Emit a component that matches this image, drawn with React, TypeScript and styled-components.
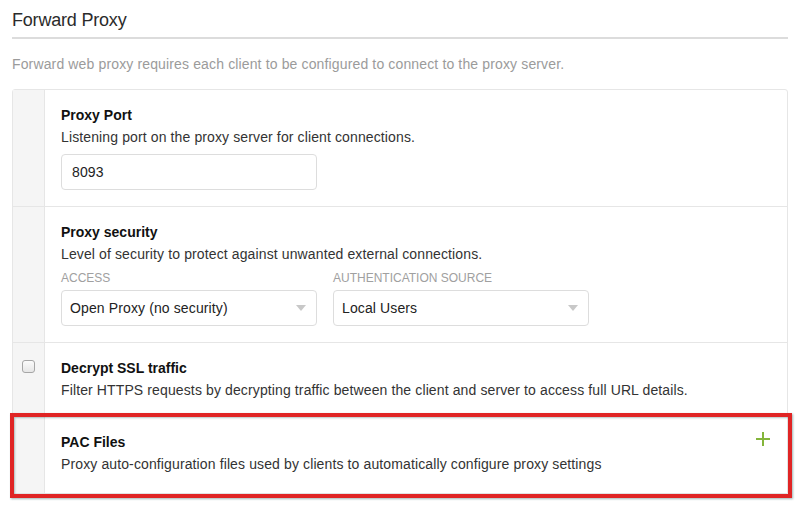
import React from "react";
import styled, { createGlobalStyle } from "styled-components";

const GlobalStyle = createGlobalStyle`
  html, body {
    margin: 0;
    padding: 0;
    background: #ffffff;
  }
  body {
    min-height: 512px;
    font-family: "Liberation Sans", Arial, sans-serif;
    color: #333;
  }
`;

const Page = styled.div`
  width: 776px;
  padding: 0 7px 20px 12px;
`;

const Heading = styled.h2`
  margin: 0;
  padding: 9px 0 6px;
  font-size: 18px;
  line-height: 22px;
  font-weight: 400;
  letter-spacing: -0.2px;
  color: #2b2b2b;
  border-bottom: 2px solid #dcdcdc;
`;

const Intro = styled.p`
  margin: 15px 0 15px;
  font-size: 14px;
  line-height: 20px;
  letter-spacing: 0.14px;
  color: #9b9b9b;
`;

const Panel = styled.div`
  border: 1px solid #e6e6e6;
  border-radius: 3px 3px 0 0;
`;

const Body = styled.div`
  flex: 1;
  padding: 15px 16px 16px 16px;
  position: relative;
`;

const Row = styled.div`
  position: relative;
  display: flex;
  border-top: 1px solid #e6e6e6;
  &:first-child {
    border-top: none;
  }
  &:last-child ${Body} {
    padding-bottom: 19px;
  }
`;

const Gutter = styled.div`
  width: 31px;
  flex: none;
  background: #f5f5f5;
  border-right: 1px solid #e6e6e6;
  display: flex;
  justify-content: center;
  align-items: flex-start;
  padding-top: 17px;
`;

const Title = styled.div`
  font-size: 14px;
  line-height: 20px;
  font-weight: 700;
  color: #111;
  margin-bottom: 2px;
`;

const Help = styled.div`
  font-size: 14px;
  line-height: 20px;
  letter-spacing: 0.12px;
  color: #333;
`;

const Fields = styled.div`
  display: flex;
  gap: 16px;
  margin-top: 6px;
`;

const Field = styled.div`
  width: 256px;
`;

const Label = styled.div`
  font-size: 12px;
  line-height: 16px;
  color: #a0a0a0;
  text-transform: uppercase;
  margin-bottom: 4px;
`;

const TextInput = styled.div`
  box-sizing: border-box;
  width: 256px;
  height: 36px;
  margin-top: 7px;
  border: 1px solid #dddddd;
  border-radius: 4px;
  padding: 0 10px;
  display: flex;
  align-items: center;
  font-size: 14px;
  letter-spacing: 0.12px;
  color: #222;
`;

const Select = styled.div`
  box-sizing: border-box;
  width: 256px;
  height: 36px;
  border: 1px solid #dddddd;
  border-radius: 4px;
  padding: 0 10px 0 8px;
  display: flex;
  align-items: center;
  justify-content: space-between;
  font-size: 14px;
  letter-spacing: 0.12px;
  color: #222;
`;

const Caret = styled.span`
  width: 0;
  height: 0;
  border-left: 5px solid transparent;
  border-right: 5px solid transparent;
  border-top: 6px solid #c8c8c8;
`;

const Checkbox = styled.span`
  box-sizing: border-box;
  width: 13px;
  height: 13px;
  border: 1px solid #a6a6a6;
  border-radius: 3px;
  background: linear-gradient(#fbfbfb, #e6e6e6);
`;

const AddButton = styled.button`
  position: absolute;
  top: 14px;
  right: 16px;
  border: none;
  background: none;
  padding: 0;
  width: 16px;
  height: 16px;
  cursor: pointer;
`;

const Highlight = styled.div`
  position: absolute;
  top: -4px;
  left: -3px;
  right: -5px;
  bottom: -5px;
  border: 4px solid #e02525;
  box-shadow: 1px 1px 2px rgba(40, 90, 90, 0.45), inset 1px 1px 2px rgba(40, 90, 90, 0.35);
  pointer-events: none;
`;

const App: React.FC = () => {
  return (
    <>
      <GlobalStyle />
      <Page>
        <Heading>Forward Proxy</Heading>
        <Intro>
          Forward web proxy requires each client to be configured to connect to
          the proxy server.
        </Intro>
        <Panel>
          <Row>
            <Gutter />
            <Body>
              <Title>Proxy Port</Title>
              <Help>Listening port on the proxy server for client connections.</Help>
              <TextInput>8093</TextInput>
            </Body>
          </Row>
          <Row>
            <Gutter />
            <Body>
              <Title>Proxy security</Title>
              <Help>
                Level of security to protect against unwanted external connections.
              </Help>
              <Fields>
                <Field>
                  <Label>Access</Label>
                  <Select>
                    Open Proxy (no security)
                    <Caret />
                  </Select>
                </Field>
                <Field>
                  <Label>Authentication source</Label>
                  <Select>
                    Local Users
                    <Caret />
                  </Select>
                </Field>
              </Fields>
            </Body>
          </Row>
          <Row>
            <Gutter>
              <Checkbox />
            </Gutter>
            <Body>
              <Title>Decrypt SSL traffic</Title>
              <Help>
                Filter HTTPS requests by decrypting traffic between the client and
                server to access full URL details.
              </Help>
            </Body>
          </Row>
          <Row>
            <Gutter />
            <Body>
              <Title>PAC Files</Title>
              <Help>
                Proxy auto-configuration files used by clients to automatically
                configure proxy settings
              </Help>
              <AddButton aria-label="Add PAC file">
                <svg width="16" height="16" viewBox="0 0 16 16">
                  <path d="M8 1v14M1 8h14" stroke="#84b53b" strokeWidth="2" />
                </svg>
              </AddButton>
            </Body>
            <Highlight />
          </Row>
        </Panel>
      </Page>
    </>
  );
};

export default App;
